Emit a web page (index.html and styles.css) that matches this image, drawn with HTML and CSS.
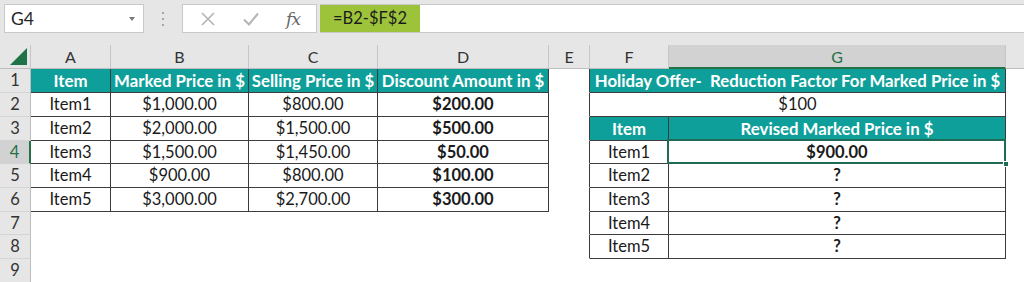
FILE: index.html
```html
<!DOCTYPE html>
<html lang="en">
<head>
    <meta charset="UTF-8">
    <title>Revised Marked Price</title>
    <link rel="stylesheet" href="styles.css">
</head>
<body>
    <div class="bar">
        <div class="namebox">
            <span class="name">G4</span>
            <span class="caret"></span>
        </div>
        <div class="dots"><i></i><i></i><i></i></div>
        <div class="btns">
            <svg class="ico" width="16" height="16" viewBox="0 0 16 16"><path d="M2 2 L14 14 M14 2 L2 14" stroke="#b4b4b4" stroke-width="1.6" fill="none"/></svg>
            <svg class="ico" width="18" height="16" viewBox="0 0 18 16"><path d="M2 8.5 L7 13.5 L16 2.5" stroke="#b4b4b4" stroke-width="2" fill="none"/></svg>
            <span class="fx">fx</span>
        </div>
        <div class="formula"><span class="sel">=B2-$F$2</span></div>
    </div>

    <div class="sheet">
        <!-- column headers -->
        <div class="corner"><span class="tri"></span></div>
        <div class="ch">A</div>
        <div class="ch">B</div>
        <div class="ch">C</div>
        <div class="ch">D</div>
        <div class="ch">E</div>
        <div class="ch">F</div>
        <div class="ch on">G</div>
        <div class="ch last"></div>

        <!-- row 1 -->
        <div class="rh">1</div>
        <div class="c t hd">Item</div>
        <div class="c t hd">Marked Price in $</div>
        <div class="c t hd">Selling Price in $</div>
        <div class="c t hd">Discount Amount in $</div>
        <div class="c e"></div>
        <div class="c t hd span2">Holiday Offer-&nbsp; Reduction Factor For Marked Price in $</div>
        <div class="c"></div>

        <!-- row 2 -->
        <div class="rh">2</div>
        <div class="c t">Item1</div>
        <div class="c t">$1,000.00</div>
        <div class="c t">$800.00</div>
        <div class="c t b">$200.00</div>
        <div class="c e"></div>
        <div class="c t span2">$100</div>
        <div class="c"></div>

        <!-- row 3 -->
        <div class="rh">3</div>
        <div class="c t">Item2</div>
        <div class="c t">$2,000.00</div>
        <div class="c t">$1,500.00</div>
        <div class="c t b">$500.00</div>
        <div class="c e"></div>
        <div class="c t hd">Item</div>
        <div class="c t hd">Revised Marked Price in $</div>
        <div class="c"></div>

        <!-- row 4 -->
        <div class="rh on">4</div>
        <div class="c t">Item3</div>
        <div class="c t">$1,500.00</div>
        <div class="c t">$1,450.00</div>
        <div class="c t b">$50.00</div>
        <div class="c e"></div>
        <div class="c t">Item1</div>
        <div class="c t b active">$900.00<span class="handle"></span></div>
        <div class="c"></div>

        <!-- row 5 -->
        <div class="rh">5</div>
        <div class="c t">Item4</div>
        <div class="c t">$900.00</div>
        <div class="c t">$800.00</div>
        <div class="c t b">$100.00</div>
        <div class="c e"></div>
        <div class="c t">Item2</div>
        <div class="c t b">?</div>
        <div class="c"></div>

        <!-- row 6 -->
        <div class="rh">6</div>
        <div class="c t">Item5</div>
        <div class="c t">$3,000.00</div>
        <div class="c t">$2,700.00</div>
        <div class="c t b">$300.00</div>
        <div class="c e"></div>
        <div class="c t">Item3</div>
        <div class="c t b">?</div>
        <div class="c"></div>

        <!-- row 7 -->
        <div class="rh">7</div>
        <div class="c"></div>
        <div class="c"></div>
        <div class="c"></div>
        <div class="c"></div>
        <div class="c e"></div>
        <div class="c t">Item4</div>
        <div class="c t b">?</div>
        <div class="c"></div>

        <!-- row 8 -->
        <div class="rh">8</div>
        <div class="c"></div>
        <div class="c"></div>
        <div class="c"></div>
        <div class="c"></div>
        <div class="c e"></div>
        <div class="c t">Item5</div>
        <div class="c t b">?</div>
        <div class="c"></div>

        <!-- row 9 -->
        <div class="rh">9</div>
        <div class="c"></div>
        <div class="c"></div>
        <div class="c"></div>
        <div class="c"></div>
        <div class="c"></div>
        <div class="c"></div>
        <div class="c"></div>
        <div class="c"></div>
    </div>
</body>
</html>
```

FILE: styles.css
```css
* {
    margin: 0;
    padding: 0;
    box-sizing: border-box;
}
body {
    width: 1024px;
    height: 282px;
    overflow: hidden;
    background: #fff;
    font-family: Lato, "Liberation Sans", sans-serif;
    font-size: 16px;
    color: #1a1a1a;
}

/* formula bar */
.bar {
    height: 45px;
    background: #e6e6e6;
    display: flex;
    align-items: flex-start;
    padding: 4px 0 0 4px;
}
.namebox {
    width: 140px;
    height: 29px;
    background: #fff;
    border: 1px solid #c9c9c9;
    display: flex;
    align-items: center;
    justify-content: space-between;
    padding: 0 8px 0 6px;
}
.name {
    font-size: 17.5px;
    color: #262626;
}
.caret {
    width: 0;
    height: 0;
    border-left: 3.5px solid transparent;
    border-right: 3.5px solid transparent;
    border-top: 4px solid #7a7a7a;
}
.dots {
    width: 38px;
    height: 29px;
    display: flex;
    flex-direction: column;
    align-items: center;
    justify-content: center;
    gap: 4px;
}
.dots i {
    width: 2px;
    height: 2px;
    background: #a8a8a8;
}
.btns {
    width: 135px;
    height: 29px;
    background: #fff;
    border: 1px solid #c9c9c9;
    display: flex;
    align-items: center;
    justify-content: space-between;
    padding: 0 16px 0 17px;
}
.fx {
    font-family: "DejaVu Serif", "Liberation Serif", serif;
    font-style: italic;
    font-size: 17px;
    color: #666;
    letter-spacing: -1px;
}
.formula {
    flex: 1;
    height: 29px;
    margin-left: 3px;
    background: #fff;
    border-top: 1px solid #c9c9c9;
    border-bottom: 1px solid #c9c9c9;
    display: flex;
}
.sel {
    width: 100px;
    height: 27px;
    background: #9dc33b;
    padding-left: 13px;
    line-height: 27px;
    font-size: 16.5px;
    color: #1c1c1c;
}

/* sheet grid */
.sheet {
    display: grid;
    grid-template-columns: 31px 80px 138px 129px 171px 41px 79px 337px 18px;
    grid-template-rows: 24px 24px 24px 24px 23px 24px 24px 23px 24px 24px;
}
.corner {
    background: #e6e6e6;
    border-right: 1px solid #c6c6c6;
    border-bottom: 1px solid #bdbdbd;
    position: relative;
}
.tri {
    position: absolute;
    right: 3px;
    bottom: 3px;
    width: 0;
    height: 0;
    border-left: 17px solid transparent;
    border-bottom: 17px solid #207346;
}
.ch {
    background: #e6e6e6;
    border-right: 1px solid #c6c6c6;
    border-bottom: 1px solid #bdbdbd;
    text-align: center;
    line-height: 24px;
    color: #333;
}
.ch.on {
    background: #d2d2d2;
    color: #217346;
    border-bottom: 2px solid #217346;
}
.ch.last {
    border-right: none;
}
.rh {
    background: #e6e6e6;
    border-right: 1px solid #bdbdbd;
    border-bottom: 1px solid #d4d4d4;
    text-align: center;
    line-height: 23px;
    font-size: 16.5px;
    color: #333;
}
.rh.on {
    background: #d2d2d2;
    color: #217346;
    border-right: 2px solid #217346;
}
.c {
    border-right: 1px solid #fff;
    border-bottom: 1px solid #fff;
    background: #fff;
    text-align: center;
    line-height: 23px;
    font-size: 16.5px;
    white-space: nowrap;
}
.c.t {
    border-right-color: #3c3c3c;
    border-bottom-color: #3c3c3c;
}
.c.e {
    border-right-color: #3c3c3c;
}
.c.hd {
    background: #0f9f9a;
    color: #fff;
    font-weight: bold;
    font-size: 16.8px;
}
.c.b {
    font-weight: bold;
}
.span2 {
    grid-column: span 2;
}
.active {
    position: relative;
}
.active::after {
    content: "";
    position: absolute;
    left: -2px;
    top: -2px;
    right: -1px;
    bottom: -1px;
    border: 2px solid #1f6b55;
}
.handle {
    position: absolute;
    right: -4px;
    bottom: -4px;
    width: 6px;
    height: 6px;
    background: #1f6b55;
    border: 1px solid #fff;
    z-index: 1;
}
```
